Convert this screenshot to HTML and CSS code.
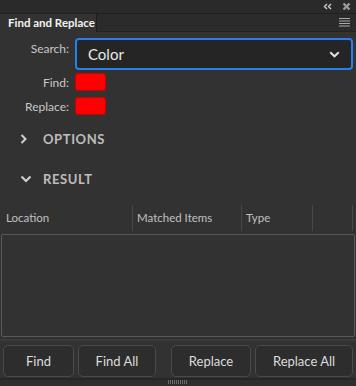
FILE: index.html
```html
<!DOCTYPE html>
<html lang="en">

<head>
    <meta charset="UTF-8" />
    <title>Find and Replace</title>
    <link rel="stylesheet" href="styles.css">
</head>

<body>
    <div class="panel">
        <div class="titlebar">
            <svg class="collapse" width="9" height="7" viewBox="0 0 9 7">
                <path d="M4 1 L1.5 3.5 L4 6 M8 1 L5.5 3.5 L8 6" fill="none" stroke="#d0d0d0" stroke-width="1.4" />
            </svg>
            <svg class="close" width="9" height="9" viewBox="0 0 9 9">
                <path d="M1.5 1.5 L7.5 7.5 M7.5 1.5 L1.5 7.5" stroke="#9a9a9a" stroke-width="2.4" />
            </svg>
        </div>

        <div class="tabs">
            <div class="tab">Find and Replace</div>
            <svg class="menu" width="11" height="9" viewBox="0 0 11 9">
                <path d="M0 0.5 H11 M0 3 H11 M0 5.5 H11 M0 8 H11" stroke="#a8a8a8" stroke-width="1" />
            </svg>
        </div>

        <div class="form">
            <label class="lbl search-lbl">Search:</label>
            <div class="select">
                <span>Color</span>
                <svg width="11" height="7" viewBox="0 0 11 7">
                    <path d="M1.2 1.2 L5.5 5.3 L9.8 1.2" fill="none" stroke="#e0e0e0" stroke-width="2" />
                </svg>
            </div>

            <label class="lbl">Find:</label>
            <div class="swatch"></div>

            <label class="lbl">Replace:</label>
            <div class="swatch"></div>
        </div>

        <div class="section first">
            <svg width="12" height="10" viewBox="0 0 12 10">
                <path d="M1.5 1 L5.5 5 L1.5 9" fill="none" stroke="#d0d0d0" stroke-width="2" />
            </svg>
            <span>OPTIONS</span>
        </div>
        <div class="section">
            <svg width="12" height="10" viewBox="0 0 12 10">
                <path d="M1.5 2.5 L6 7 L10.5 2.5" fill="none" stroke="#d0d0d0" stroke-width="2" />
            </svg>
            <span>RESULT</span>
        </div>

        <div class="thead">
            <div class="col c1">Location</div>
            <div class="col c2">Matched Items</div>
            <div class="col c3">Type</div>
            <div class="col c4"></div>
        </div>
        <div class="results"></div>

        <div class="buttons">
            <div class="group">
                <button class="btn b-find">Find</button>
                <button class="btn b-findall">Find All</button>
            </div>
            <div class="group">
                <button class="btn b-replace">Replace</button>
                <button class="btn b-replaceall">Replace All</button>
            </div>
        </div>

        <div class="scrollbar">
            <div class="grip"></div>
        </div>
    </div>
</body>

</html>
```

FILE: styles.css
```css
body {
    margin: 0;
    background-color: #323232;
    font-family: Lato, 'Open Sans', sans-serif;
    color: #c8c8c8;
}

.panel {
    width: 356px;
    height: 386px;
    display: flex;
    flex-direction: column;
    overflow: hidden;
}

.panel > * {
    flex-shrink: 0;
}

.titlebar {
    height: 13px;
    background: #2a2a2a;
    border-bottom: 1px solid #1f1f1f;
    display: flex;
    align-items: center;
    justify-content: flex-end;
    gap: 10px;
    padding-right: 5px;
}

.tabs {
    height: 17px;
    background: #2b2b2b;
    border-bottom: 1px solid #222;
    display: flex;
    align-items: stretch;
    justify-content: space-between;
}

.tab {
    width: 88px;
    padding-left: 8px;
    background: #323232;
    border-right: 1px solid #1e1e1e;
    margin-bottom: -1px;
    font-size: 11.5px;
    font-weight: bold;
    color: #f2f2f2;
    line-height: 18px;
}

.menu {
    align-self: center;
    margin-right: 6px;
}

.form {
    display: grid;
    grid-template-columns: 69px 1fr;
    column-gap: 6px;
    row-gap: 6px;
    padding: 6px 3px 0 0;
}

.lbl {
    font-size: 12px;
    text-align: right;
    color: #c8c8c8;
    align-self: center;
}

.search-lbl {
    align-self: start;
    padding-top: 3px;
}

.select {
    height: 28px;
    margin-bottom: -3px;
    border: 2px solid #2680eb;
    border-radius: 4px;
    background: #252525;
    display: flex;
    align-items: center;
    justify-content: space-between;
    padding: 0 11px 0 11px;
    font-size: 15px;
    color: #e8e8e8;
}

.swatch {
    width: 29px;
    height: 16px;
    background: #ff0000;
    border: 1px solid #c80000;
    border-radius: 3px;
}

.section {
    height: 40px;
    display: flex;
    align-items: center;
    gap: 11px;
    padding-left: 20px;
    font-size: 13px;
    font-weight: bold;
    letter-spacing: 0.6px;
    color: #bdbdbd;
}

.section.first {
    margin-top: 4px;
}

.thead {
    display: flex;
    height: 26px;
    margin-top: 6px;
    font-size: 11.5px;
    color: #c0c0c0;
}

.col {
    line-height: 26px;
    box-sizing: border-box;
    border-right: 1px solid #474747;
}

.c1 {
    width: 133px;
    padding-left: 6px;
}

.c2 {
    width: 109px;
    padding-left: 4px;
}

.c3 {
    width: 71px;
    padding-left: 4px;
}

.c4 {
    width: 40px;
}

.results {
    height: 101px;
    margin: 3px 1px 0 1px;
    border: 1px solid #5a5a5a;
    border-radius: 2px;
    background: #323232;
}

.buttons {
    display: flex;
    justify-content: space-between;
    margin-top: 2px;
    padding: 4px 3px 0 3px;
    border-top: 2px solid #3b3b3b;
}

.group {
    display: flex;
    gap: 4px;
}

.btn {
    height: 32px;
    background: #2d2d2d;
    border: 1px solid #4a4a4a;
    border-radius: 5px;
    font-family: Lato, 'Open Sans', sans-serif;
    font-size: 13px;
    color: #dcdcdc;
    padding: 0;
}

.b-find {
    width: 71px;
}

.b-findall {
    width: 78px;
}

.b-replace {
    width: 80px;
}

.b-replaceall {
    width: 98px;
}

.scrollbar {
    margin-top: 1px;
    height: 6px;
    background: #2e2e2e;
    border-top: 2px solid #262626;
    display: flex;
    justify-content: center;
}

.grip {
    width: 20px;
    height: 4px;
    background: repeating-linear-gradient(90deg, #6a6a6a 0 1px, transparent 1px 2px);
}
```
